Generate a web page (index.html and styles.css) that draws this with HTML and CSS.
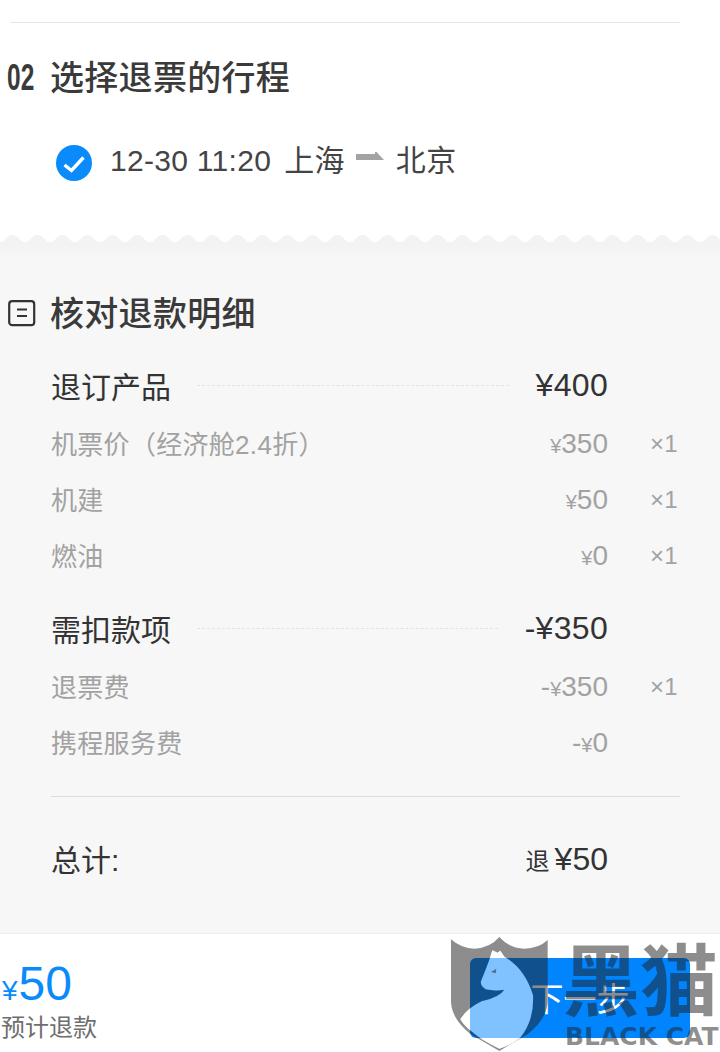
FILE: index.html
```html
<!DOCTYPE html>
<html lang="en">
<head>
    <meta charset="UTF-8">
    <meta name="viewport" content="width=device-width, initial-scale=1.0">
    <title>退票</title>
    <link rel="stylesheet" href="styles.css">
</head>
<body>
    <div class="page">
        <section class="trip">
            <div class="top-line"></div>
            <h2 class="step-title"><span class="step-no">02</span>选择退票的行程</h2>
            <div class="trip-row">
                <svg class="check" viewBox="0 0 36 36">
                    <circle cx="18" cy="18" r="18" fill="#0a8bfb"/>
                    <path d="M8.5 20l7 5.5L27.5 12.5" fill="none" stroke="#fff" stroke-width="3.4"/>
                </svg>
                <span class="trip-time">12-30 11:20</span>
                <span class="trip-city">上海</span>
                <svg class="trip-arrow" viewBox="0 0 28 8">
                    <path d="M0 2h19V0h1.5L28 8H0z" fill="#a3a3a3"/>
                </svg>
                <span class="trip-city">北京</span>
            </div>
        </section>

        <svg class="scallop" width="720" height="10">
            <defs>
                <pattern id="wave" width="25" height="10" patternUnits="userSpaceOnUse">
                    <path d="M0 7C6 7 6 0 12.5 0S19 7 25 7V10H0Z" fill="#f3f3f3"/>
                </pattern>
            </defs>
            <rect width="720" height="10" fill="url(#wave)"/>
        </svg>

        <section class="detail">
            <h2 class="detail-title">
                <svg class="note-icon" viewBox="0 0 28 28">
                    <rect x="1.2" y="2.2" width="25" height="24" rx="3" fill="none" stroke="#333" stroke-width="2.2"/>
                    <path d="M9 10.5h10M9 17h10" stroke="#333" stroke-width="2"/>
                </svg>
                核对退款明细
            </h2>

            <div class="row row-main first">
                <span>退订产品</span>
                <i class="dots"></i>
                <span class="amount">¥400</span>
                <span class="qty"></span>
            </div>
            <div class="row row-sub row-sub-first">
                <span>机票价（经济舱2.4折）</span>
                <span class="amount"><small>¥</small>350</span>
                <span class="qty">×1</span>
            </div>
            <div class="row row-sub">
                <span>机建</span>
                <span class="amount"><small>¥</small>50</span>
                <span class="qty">×1</span>
            </div>
            <div class="row row-sub">
                <span>燃油</span>
                <span class="amount"><small>¥</small>0</span>
                <span class="qty">×1</span>
            </div>

            <div class="row row-main second">
                <span>需扣款项</span>
                <i class="dots"></i>
                <span class="amount">-¥350</span>
                <span class="qty"></span>
            </div>
            <div class="row row-sub row-sub-first">
                <span>退票费</span>
                <span class="amount">-<small>¥</small>350</span>
                <span class="qty">×1</span>
            </div>
            <div class="row row-sub">
                <span>携程服务费</span>
                <span class="amount">-<small>¥</small>0</span>
                <span class="qty"></span>
            </div>

            <div class="total">
                <span>总计:</span>
                <span class="amount"><small>退</small>¥50</span>
                <span class="qty"></span>
            </div>
        </section>

        <footer class="bar">
            <div class="refund">
                <div class="refund-num"><small>¥</small>50</div>
                <div class="refund-label">预计退款</div>
            </div>
            <button class="next">下一步</button>
        </footer>

        <!-- watermark sits over the footer -->
        <div class="mark">
            <svg class="mark-logo" viewBox="0 0 360 360">
                <path class="mark-shield" fill-rule="evenodd" d="M18 22Q50 50 88 50Q135 48 163 15Q192 48 238 50Q280 50 308 24V210Q305 260 250 305L163 357L75 305Q20 260 18 210Z
                    M142 55L158 62L166 56L178 74Q240 110 264 190Q268 265 225 318Q195 340 163 350Q110 325 82 300Q60 285 46 262Q65 230 110 208Q165 195 178 173Q150 178 122 172Q105 160 108 148Q115 130 125 105Q135 80 142 55Z"/>
                <path class="mark-cat" d="M142 55L158 62L166 56L178 74Q240 110 264 190Q268 265 225 318Q195 340 163 350Q110 325 82 300Q60 285 46 262Q65 230 110 208Q165 195 178 173Q150 178 122 172Q105 160 108 148Q115 130 125 105Q135 80 142 55Z"/>
                <path class="mark-shield" d="M138 120L154 110L152 124Z"/>
            </svg>
            <div class="mark-text">
                <div class="mark-cn">黑猫</div>
                <div class="mark-en">BLACK CAT</div>
            </div>
        </div>
    </div>
</body>
</html>
```

FILE: styles.css
```css
* {
    box-sizing: border-box;
}

body {
    margin: 0;
    padding: 0;
    background-color: #fff;
    font-family: "Liberation Sans", "Noto Sans CJK SC", sans-serif;
    color: #333;
}

.page {
    position: relative;
    width: 720px;
    height: 1052px;
    overflow: hidden;
    display: flex;
    flex-direction: column;
}

h2 {
    margin: 0;
    font-size: 34px;
    font-weight: 500;
    line-height: 44px;
    letter-spacing: 0.3px;
    display: flex;
    align-items: center;
    color: #3a3a3a;
}

/* trip section */
.trip {
    height: 235px;
    flex: none;
    padding-top: 22px;
    background-color: #fff;
}

.top-line {
    height: 1px;
    margin: 0 40px 0 10px;
    background-color: #e6e6e6;
}

.step-title {
    margin-top: 33px;
    padding-left: 7px;
}

.step-no {
    width: 43px;
    font-size: 37px;
    font-weight: 700;
    transform: scaleX(0.66);
    transform-origin: left center;
}

.trip-row {
    display: flex;
    align-items: center;
    margin-top: 40px;
    padding-left: 56px;
    font-size: 30px;
    line-height: 40px;
    letter-spacing: 0.3px;
    color: #444;
}

.check {
    width: 36px;
    height: 36px;
    margin: 5px 18px 0 0;
}

.trip-time {
    margin-right: 13px;
}

.trip-arrow {
    width: 28px;
    height: 8px;
    margin: 0 12px 10px 11px;
}

/* wavy edge between the white and grey parts */
.scallop {
    display: block;
    flex: none;
    background-color: #fff;
}

.detail {
    height: 688px;
    flex: none;
    padding-top: 47px;
    background-image: linear-gradient(#f3f3f3, #f7f7f7 14px);
}

.detail-title {
    padding-left: 8px;
}

.note-icon {
    width: 28px;
    height: 28px;
    margin: 0 14px 2px 0;
}

.row {
    display: flex;
    align-items: center;
    padding-left: 51px;
    padding-right: 42px;
}

.row-main {
    height: 44px;
    font-size: 30px;
    color: #333;
}

.row-main .amount {
    font-size: 32px;
    letter-spacing: 0.3px;
}

.row-main.first {
    margin-top: 27px;
}

.row-main.second {
    margin-top: 24px;
}

.row-sub {
    height: 56px;
    font-size: 26px;
    letter-spacing: 0.3px;
    color: #a2a2a2;
}

.row-sub .amount {
    margin-left: auto;
    font-size: 28px;
    letter-spacing: 0;
}

.row-sub .amount,
.row-sub .qty {
    margin-top: 3px;
}

.row-sub-first {
    margin-top: 7px;
}

.row small {
    font-size: 20px;
}

.dots {
    flex: 1;
    margin: 0 27px 0 26px;
    border-top: 1px dashed #e3e3e3;
}

.amount {
    text-align: right;
}

.qty {
    width: 70px;
    font-size: 24px;
    text-align: right;
}

.total {
    display: flex;
    align-items: center;
    height: 122px;
    margin: 27px 40px 0 51px;
    padding-right: 2px;
    border-top: 1px solid #dedede;
    font-size: 30px;
    color: #333;
}

.total .amount {
    margin: 3px 0 0 auto;
    font-size: 32px;
}

.total small {
    margin-right: 5px;
    font-size: 24px;
}

/* bottom bar */
.bar {
    flex: 1;
    display: flex;
    align-items: flex-start;
    justify-content: space-between;
    padding: 24px 30px 0 0;
    background-color: #fff;
    border-top: 1px solid #eee;
}

.refund-num {
    padding: 1px 0 0 2px;
    font-size: 48px;
    line-height: 50px;
    color: #0a8bfb;
}

.refund-num small {
    margin-right: 1px;
    font-size: 28px;
}

.refund-label {
    margin-top: -3px;
    padding-left: 1px;
    font-size: 24px;
    line-height: 30px;
    color: #6e6e6e;
}

.next {
    width: 220px;
    height: 80px;
    padding: 0 0 3px;
    border: none;
    border-radius: 6px;
    background-color: #0085ff;
    color: #fff;
    font-family: inherit;
    font-size: 33px;
}

/* watermark */
.mark {
    position: absolute;
    left: 445px;
    top: 932px;
    width: 275px;
    height: 120px;
    display: flex;
}

.mark-logo {
    width: 120px;
    height: 120px;
    flex: none;
}

.mark-shield {
    fill: rgba(31, 31, 31, 0.51);
}

.mark-cat {
    fill: #fff;
    fill-opacity: 0.5;
}

.mark-text {
    color: rgba(31, 31, 31, 0.51);
    font-weight: 700;
}

.mark-cn {
    font-size: 78px;
    line-height: 78px;
    margin: 12px 0 0 -3px;
    white-space: nowrap;
}

.mark-en {
    font-family: "DejaVu Sans", sans-serif;
    font-size: 25px;
    line-height: 26px;
    margin-top: 2px;
    white-space: nowrap;
}
```
